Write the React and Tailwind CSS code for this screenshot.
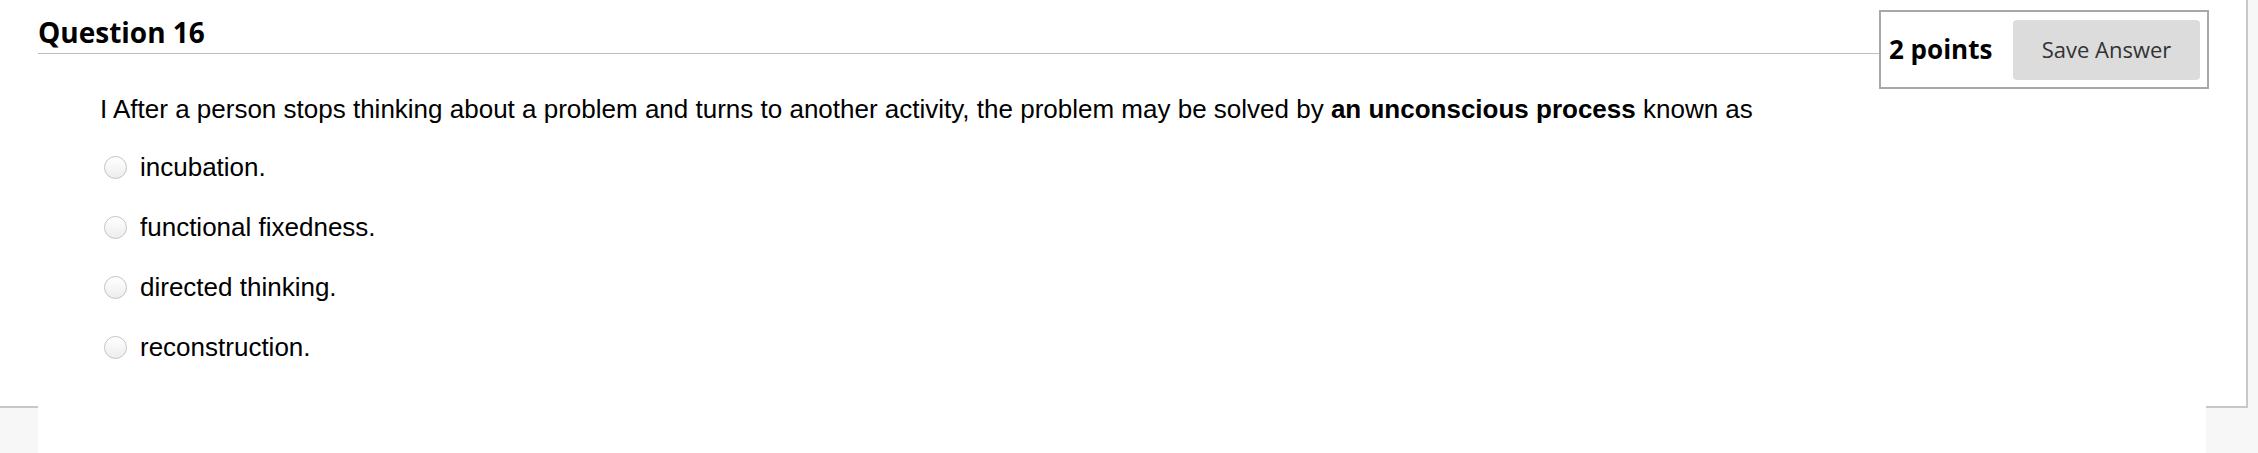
export default function App() {
  const options = ["incubation.", "functional fixedness.", "directed thinking.", "reconstruction."];
  return (
    <div className="w-[2258px] h-[453px] bg-[#f7f7f7] overflow-hidden">
      <div className="w-[2248px] h-[408px] bg-white border-r-2 border-b-2 border-[#c8c8c8] pl-[38px] pr-[37px]">
        <div className="flex items-start pt-[10px]">
          <div className="flex-1 h-[44px] border-b border-[#bdbdbd]">
            <h2 className="mt-[6px] text-[28px] leading-[32px] font-bold text-black" style={{ fontFamily: '"Open Sans", sans-serif' }}>
              Question 16
            </h2>
          </div>
          <div className="w-[330px] h-[79px] border-2 border-[#a8a8a8] flex items-center justify-between pl-[8px] pr-[7px]" style={{ fontFamily: '"Open Sans", sans-serif' }}>
            <span className="text-[26px] font-bold text-black">2 points</span>
            <button className="w-[187px] h-[60px] rounded-[4px] bg-[#dcdcdc] text-[22px] text-[#333]">Save Answer</button>
          </div>
        </div>
        <div style={{ fontFamily: '"Liberation Sans", Arial, sans-serif' }}>
          <p className="mt-[5px] pl-[62px] text-[26px] leading-[30px] text-black">
            I After a person stops thinking about a problem and turns to another activity, the problem may be solved by <b>an unconscious process</b> known as
          </p>
          <div className="mt-[13px] pl-[66px] flex flex-col">
            {options.map((o) => (
              <label key={o} className="h-[60px] flex items-center gap-[13px] text-[26px] leading-[30px] text-black">
                <span className="w-[23px] h-[23px] rounded-full border border-[#c4c4c4] bg-gradient-to-b from-white to-[#ededed] shrink-0"></span>
                <span>{o}</span>
              </label>
            ))}
          </div>
        </div>
      </div>
      <div className="relative -mt-[2px] ml-[38px] w-[2168px] h-[47px] bg-white"></div>
    </div>
  );
}
